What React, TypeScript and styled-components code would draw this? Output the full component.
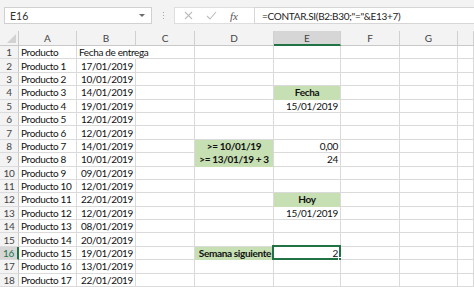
import React from 'react';
import styled, { createGlobalStyle } from 'styled-components';

const GlobalStyle = createGlobalStyle`
  html, body {
    margin: 0;
    padding: 0;
    background: #ffffff;
    overflow: hidden;
  }
  body {
    font-family: Lato, 'Liberation Sans', sans-serif;
    color: #111;
  }
`;

const COLS = '19px 58px 59px 59px 79px 67px 59px 58px 1fr';
const GRID = '#dadada';
const GREEN = '#217346';
const FILL = '#c6e0b4';

const Page = styled.div`
  width: 474px;
  height: 287px;
  overflow: hidden;
  background: #ffffff;
`;

const Toolbar = styled.div`
  height: 31px;
  background: #f3f3f3;
  display: flex;
  align-items: flex-start;
  padding: 7px 0 0 4px;
  box-sizing: border-box;
`;

const NameBox = styled.div`
  width: 148px;
  height: 17px;
  box-sizing: border-box;
  background: #fff;
  border: 1px solid #d0d0d0;
  display: flex;
  align-items: center;
  justify-content: space-between;
  padding: 0 6px 0 5px;
  font-size: 10.5px;
  color: #333;
`;

const Caret = styled.span`
  width: 0;
  height: 0;
  border-left: 3px solid transparent;
  border-right: 3px solid transparent;
  border-top: 3px solid #6b6b6b;
`;

const Grip = styled.div`
  width: 22px;
  height: 17px;
  display: flex;
  flex-direction: column;
  align-items: center;
  justify-content: center;
  gap: 2px;
  span {
    width: 1px;
    height: 1px;
    background: #a8a8a8;
  }
`;

const FuncBox = styled.div`
  width: 80px;
  height: 17px;
  box-sizing: border-box;
  background: #fff;
  border: 1px solid #dedede;
  border-right: none;
  display: flex;
  align-items: center;
  gap: 13px;
  padding-left: 9px;
  color: #b9b9b9;
`;

const Fx = styled.span`
  font-family: 'Liberation Serif', serif;
  font-style: italic;
  font-size: 11px;
  color: #555;
`;

const FormulaBox = styled.div`
  flex: 1;
  height: 17px;
  box-sizing: border-box;
  background: #fff;
  border: 1px solid #d6d6d6;
  border-right: none;
  display: flex;
  align-items: center;
  padding-left: 7px;
  font-size: 10px;
  letter-spacing: -0.3px;
  color: #222;
  white-space: nowrap;
`;

const Row = styled.div<{ $h: number }>`
  display: grid;
  grid-template-columns: ${COLS};
  height: ${(p) => p.$h}px;
`;

const Corner = styled.div`
  background: #f3f3f3;
  border-right: 1px solid #c9c9c9;
  border-bottom: 1px solid #c9c9c9;
  position: relative;
  &::after {
    content: '';
    position: absolute;
    right: 2px;
    bottom: 2px;
    width: 0;
    height: 0;
    border-left: 9px solid transparent;
    border-bottom: 9px solid #d2d2d2;
  }
`;

const ColHead = styled.div<{ $active?: boolean }>`
  background: ${(p) => (p.$active ? '#d6d6d6' : '#f3f3f3')};
  border-right: 1px solid #d0d0d0;
  border-bottom: ${(p) => (p.$active ? `2px solid ${GREEN}` : '1px solid #c9c9c9')};
  display: flex;
  align-items: center;
  justify-content: center;
  font-size: 10px;
  color: #444;
  box-sizing: border-box;
`;

const RowHead = styled.div<{ $active?: boolean }>`
  background: ${(p) => (p.$active ? '#d6d6d6' : '#f3f3f3')};
  border-right: ${(p) => (p.$active ? `2px solid ${GREEN}` : '1px solid #c9c9c9')};
  border-bottom: 1px solid #dcdcdc;
  display: flex;
  align-items: center;
  justify-content: center;
  font-size: 10px;
  letter-spacing: -0.3px;
  color: ${(p) => (p.$active ? GREEN : '#444')};
  box-sizing: border-box;
`;

const Cell = styled.div<{
  $align?: 'left' | 'right' | 'center';
  $bold?: boolean;
  $fill?: boolean;
  $open?: boolean;
  $selected?: boolean;
}>`
  position: relative;
  box-sizing: border-box;
  background: ${(p) => (p.$fill ? FILL : '#fff')};
  border-right: 1px solid ${(p) => (p.$open ? (p.$fill ? FILL : '#fff') : GRID)};
  border-bottom: 1px solid ${(p) => (p.$fill ? FILL : GRID)};
  display: flex;
  align-items: center;
  justify-content: ${(p) =>
    p.$align === 'right' ? 'flex-end' : p.$align === 'center' ? 'center' : 'flex-start'};
  padding: 0 2px 0 2px;
  font-size: 10px;
  letter-spacing: -0.35px;
  font-weight: ${(p) => (p.$bold ? 700 : 400)};
  white-space: nowrap;
  overflow: visible;
  z-index: ${(p) => (p.$open ? 1 : 0)};
  ${(p) =>
    p.$selected &&
    `
    &::after {
      content: '';
      position: absolute;
      left: -2px;
      top: -2px;
      right: -1px;
      bottom: -1px;
      border: 2px solid ${GREEN};
      pointer-events: none;
    }
    &::before {
      content: '';
      position: absolute;
      right: -3px;
      bottom: -3px;
      width: 5px;
      height: 5px;
      background: ${GREEN};
      border: 1px solid #fff;
      box-sizing: border-box;
      z-index: 2;
    }
  `}
`;

type CellData = {
  text?: string;
  align?: 'left' | 'right' | 'center';
  bold?: boolean;
  fill?: boolean;
  open?: boolean;
  selected?: boolean;
};

const dates = [
  '17/01/2019', '10/01/2019', '14/01/2019', '19/01/2019', '12/01/2019', '12/01/2019',
  '14/01/2019', '10/01/2019', '09/01/2019', '12/01/2019', '22/01/2019', '12/01/2019',
  '08/01/2019', '20/01/2019', '19/01/2019', '13/01/2019', '22/01/2019',
];

// extra cells in columns C..H (index 2..7), keyed by row number
const extras: Record<number, Record<number, CellData>> = {
  4: { 4: { text: 'Fecha', align: 'center', bold: true, fill: true } },
  5: { 4: { text: '15/01/2019', align: 'right' } },
  8: {
    3: { text: '>= 10/01/19', align: 'center', bold: true, fill: true },
    4: { text: '0,00', align: 'right' },
  },
  9: {
    3: { text: '>= 13/01/19 + 3', align: 'center', bold: true, fill: true },
    4: { text: '24', align: 'right' },
  },
  12: { 4: { text: 'Hoy', align: 'center', bold: true, fill: true } },
  13: { 4: { text: '15/01/2019', align: 'right' } },
  16: {
    3: { text: 'Semana siguiente', align: 'right', bold: true, fill: true },
    4: { text: '2', align: 'right', selected: true },
  },
};

const buildRow = (n: number): CellData[] => {
  const cells: CellData[] =
    n === 1
      ? [{ text: 'Producto' }, { text: 'Fecha de entrega', open: true }]
      : [{ text: `Producto ${n - 1}` }, { text: dates[n - 2], align: 'right' }];
  for (let c = 2; c < 8; c++) cells.push(extras[n]?.[c] || {});
  return cells;
};

const letters = ['A', 'B', 'C', 'D', 'E', 'F', 'G', ''];

const App = () => {
  const rows = Array.from({ length: 18 }, (_, i) => i + 1);
  return (
    <Page>
      <GlobalStyle />
      <Toolbar>
        <NameBox>
          E16
          <Caret />
        </NameBox>
        <Grip>
          <span />
          <span />
          <span />
        </Grip>
        <FuncBox>
          <svg width="9" height="9" viewBox="0 0 9 9">
            <path d="M1 1L8 8M8 1L1 8" stroke="#bdbdbd" strokeWidth="1.1" fill="none" />
          </svg>
          <svg width="11" height="9" viewBox="0 0 11 9">
            <path d="M1 5L4 8L10 1" stroke="#bdbdbd" strokeWidth="1.1" fill="none" />
          </svg>
          <Fx>fx</Fx>
        </FuncBox>
        <FormulaBox>=CONTAR.SI(B2:B30;"="&amp;E13+7)</FormulaBox>
      </Toolbar>

      <Row $h={15}>
        <Corner />
        {letters.map((l, i) => (
          <ColHead key={i} $active={l === 'E'}>
            {l}
          </ColHead>
        ))}
      </Row>

      {rows.map((n) => (
        <Row key={n} $h={13.4}>
          <RowHead $active={n === 16}>{n}</RowHead>
          {buildRow(n).map((c, i) => (
            <Cell
              key={i}
              $align={c.align}
              $bold={c.bold}
              $fill={c.fill}
              $open={c.open}
              $selected={c.selected}
            >
              {c.text}
            </Cell>
          ))}
        </Row>
      ))}
    </Page>
  );
};

export default App;
